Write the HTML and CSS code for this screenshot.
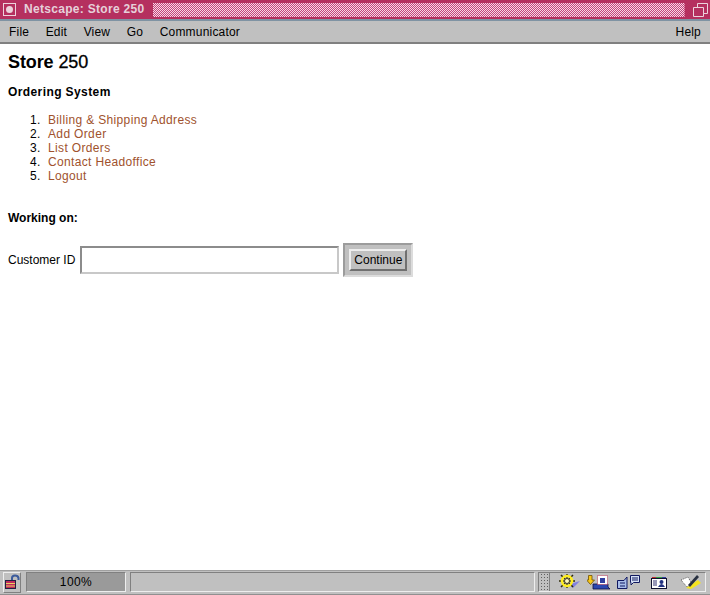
FILE: index.html
```html
<!DOCTYPE html>
<html lang="en">
<head>
  <meta charset="UTF-8">
  <title>Netscape: Store 250</title>
  <link rel="stylesheet" href="styles.css">
</head>
<body>
  <div class="titlebar">
    <div class="window-menu"><span class="window-dot"></span></div>
    <div class="window-title">Netscape: Store 250</div>
    <svg class="title-fill" height="14">
      <defs>
        <pattern id="checker" width="2" height="2" patternUnits="userSpaceOnUse">
          <rect width="2" height="2" fill="#c8407a"/>
          <rect width="1" height="1" fill="#f4dce6"/>
          <rect x="1" y="1" width="1" height="1" fill="#f4dce6"/>
        </pattern>
      </defs>
      <rect width="100%" height="100%" fill="url(#checker)"/>
    </svg>
    <svg class="window-max" width="15" height="14" viewBox="0 0 15 14">
      <path d="M4.500 .5H14.500V10.500H10.500V13.500H.5V4.500H4.500ZM1 4.500H10.500V10.500M4.500 1V4M10.500 10.500H14" fill="none" stroke="#ecd3dc"/>
    </svg>
  </div>
  <div class="menubar">
    <span class="menu-item">File</span>
    <span class="menu-item">Edit</span>
    <span class="menu-item">View</span>
    <span class="menu-item">Go</span>
    <span class="menu-item">Communicator</span>
    <span class="menu-help">Help</span>
  </div>

  <div class="content">
    <h1>Store <span class="store-num">250</span></h1>
    <h2>Ordering System</h2>
    <ol class="nav-list">
      <li><a href="#">Billing &amp; Shipping Address</a></li>
      <li><a href="#">Add Order</a></li>
      <li><a href="#">List Orders</a></li>
      <li><a href="#">Contact Headoffice</a></li>
      <li><a href="#">Logout</a></li>
    </ol>
    <h2 class="working">Working on:</h2>
    <form class="customer-form">
      <label for="customerId">Customer ID</label>
      <input type="text" id="customerId">
      <div class="default-ring"><button type="button">Continue</button></div>
    </form>
  </div>

  <div class="statusbar">
    <div class="lock-cell">
      <svg width="16" height="16" viewBox="0 0 16 16">
        <path d="M8 7V4Q8 1.500 11 1.500T14.500 4V6" fill="none" stroke="#3c5c9c" stroke-width="2"/>
        <rect x="1.500" y="6.500" width="10" height="8" fill="#c02a5c" stroke="#202040"/>
        <path d="M2 9.500H11M2 12H11" stroke="#e8d060"/>
      </svg>
    </div>
    <div class="progress-cell">100%</div>
    <div class="message-cell"></div>
    <div class="dock">
      <div class="dock-grip"></div>
      <svg class="dock-icon" width="24" height="18" viewBox="0 0 24 18">
        <path d="M13 11L23 8L16 15Z" fill="#8080e0"/>
        <path d="M10 1V15M2 8H18M4 2L16 14M16 2L4 14" stroke="#2c2808" stroke-width="1.500"/>
        <circle cx="10" cy="8" r="5" fill="none" stroke="#ffee20" stroke-width="2.500"/>
        <circle cx="10" cy="8" r="2" fill="#fffbc0"/>
      </svg>
      <svg class="dock-icon" width="24" height="18" viewBox="0 0 24 18">
        <path d="M6 11H21V14L23 16H6Z" fill="#2c48b0" stroke="#101040" stroke-width=".8"/>
        <rect x="10.500" y="2.500" width="10" height="9" fill="#fff" stroke="#b03050" stroke-dasharray="1 1"/>
        <rect x="13" y="5" width="5" height="5" fill="#3040a0"/>
        <path d="M1.500 2.500H5V7H7.500L3.500 11.500L-.5 7H1.500Z" fill="#f8c818" stroke="#705000" stroke-width=".8"/>
      </svg>
      <svg class="dock-icon" width="24" height="18" viewBox="0 0 24 18">
        <path d="M.5 7.500H7L10 4V15.500H.5Z" fill="#a8bce8" stroke="#101860"/>
        <path d="M3 10H8M3 13H8" stroke="#101860"/>
        <path d="M13.500 2.500H22.500V9.500H16.500L14 12V9.500H13.500Z" fill="#d4e0f4" stroke="#101860"/>
        <path d="M15 5H21M15 7H21" stroke="#101860"/>
      </svg>
      <svg class="dock-icon" width="24" height="18" viewBox="0 0 24 18">
        <rect x="4.500" y="5.500" width="15" height="10" fill="#fff" stroke="#101030"/>
        <path d="M5 4.500H9" stroke="#c03030"/><path d="M9 4.500H15" stroke="#30a040"/><path d="M15 4.500H19" stroke="#3040a0"/>
        <path d="M6 8H10M6 10H10M6 12H10" stroke="#303070"/>
        <circle cx="14.500" cy="9" r="2" fill="#203080"/>
        <path d="M11 14Q14.500 8 18 14Z" fill="#203080"/>
      </svg>
      <svg class="dock-icon" width="24" height="18" viewBox="0 0 24 18">
        <path d="M4 7L11 4L15 11L10 14Z" fill="#fff" stroke="#606060" stroke-dasharray="1 1"/>
        <path d="M9 15L21 7L24 10L14 16Z" fill="#f4e420"/>
        <path d="M11 12L20 2L22 4L13 14Z" fill="#283040"/>
      </svg>
    </div>
  </div>
</body>
</html>
```

FILE: styles.css
```css
body {
  margin: 0;
  display: flex;
  flex-direction: column;
  height: 595px;
  overflow: hidden;
  background-color: #fff;
  color: #000;
  font-family: "Liberation Sans", Arial, sans-serif;
  font-size: 12px;
}
.titlebar {
  display: flex;
  align-items: flex-start;
  height: 19px;
  padding-left: 3px;
  background-color: #b5305f;
  color: #e6d0da;
}
.window-menu {
  display: flex;
  align-items: center;
  justify-content: center;
  box-sizing: border-box;
  width: 13px;
  height: 13px;
  margin-top: 3px;
  border: 1px solid #ecd3dc;
}
.window-dot {
  width: 7px;
  height: 7px;
  background-color: #ecd3dc;
  border-radius: 50%;
}
.window-title {
  padding: 2px 9px 0 8px;
  font-weight: bold;
  letter-spacing: .3px;
}
.title-fill {
  flex: 1;
  margin-top: 3px;
}
.window-max {
  margin: 3px 2px 0 8px;
}
.menubar {
  display: flex;
  align-items: center;
  gap: 16.5px;
  height: 20px;
  padding: 1px 9px 0;
  background-color: #c0c0c0;
  border-top: 2px solid #7f93a3;
  border-bottom: 2px solid #808080;
  letter-spacing: .2px;
}
.menu-help {
  margin-left: auto;
}
.content {
  flex: 1;
  padding: 0 8px;
}
h1 {
  margin: 8px 0 13px;
  font-size: 18px;
  line-height: 20px;
  letter-spacing: -.1px;
}
.store-num {
  font-weight: normal;
  -webkit-text-stroke: .3px #000;
}
h2 {
  margin: 0 0 14px;
  font-size: 12px;
  line-height: 14px;
  letter-spacing: .4px;
}
.nav-list {
  margin: 0 0 28px;
  padding: 0 0 0 40px;
  line-height: 14px;
  letter-spacing: .35px;
}
.nav-list li::marker {
  content: counter(list-item) ".\00a0\00a0";
}
.nav-list a {
  color: #a0522d;
  text-decoration: none;
}
.working {
  margin-bottom: 18px;
  letter-spacing: 0;
}
.customer-form {
  display: flex;
  align-items: center;
  gap: 4px;
}
.customer-form input {
  box-sizing: border-box;
  width: 259px;
  height: 28px;
  margin-left: 1px;
  padding: 2px;
  background-color: #fff;
  border: 2px solid;
  border-color: #8c8c8c #c8c8c8 #c8c8c8 #8c8c8c;
}
.default-ring {
  padding: 4px;
  background-color: #c0c0c0;
  border: 2px solid;
  border-color: #9c9c9c #dcdcdc #dcdcdc #9c9c9c;
}
.default-ring button {
  display: block;
  height: 22px;
  padding: 0 3px;
  background-color: #c0c0c0;
  color: #000;
  font: 12px "Liberation Sans", Arial, sans-serif;
  border: 2px solid;
  border-color: #eee #707070 #707070 #eee;
}
.statusbar {
  display: flex;
  align-items: center;
  box-sizing: border-box;
  height: 25px;
  padding: 1px 4px 2px 3px;
  background-color: #c0c0c0;
  border-top: 1px solid #a0a0a0;
  border-bottom: 1px solid #909090;
}
.lock-cell {
  display: flex;
  align-items: center;
  justify-content: center;
  box-sizing: border-box;
  width: 18px;
  height: 21px;
  margin-right: 5px;
  border: 1px solid;
  border-color: #eee #808080 #808080 #eee;
}
.progress-cell {
  box-sizing: border-box;
  width: 100px;
  height: 20px;
  margin-right: 4px;
  line-height: 18px;
  text-align: center;
  letter-spacing: .4px;
  background-color: #9a9a9a;
  border: 1px solid;
  border-color: #808080 #eee #eee #808080;
}
.message-cell {
  flex: 1;
  height: 20px;
  box-sizing: border-box;
  margin-right: 3px;
  border: 1px solid;
  border-color: #808080 #eee #eee #808080;
}
.dock {
  display: flex;
  align-items: center;
  gap: 6px;
  box-sizing: border-box;
  width: 168px;
  height: 20px;
  padding-left: 1px;
  border: 1px solid;
  border-color: #808080 #eee #eee #808080;
}
.dock-grip {
  width: 9px;
  height: 18px;
  margin-right: 1px;
  border-right: 1px solid #808080;
  background-image: radial-gradient(#606060 35%, transparent 40%);
  background-size: 3px 3px;
}
.dock-icon {
  display: block;
}
```
